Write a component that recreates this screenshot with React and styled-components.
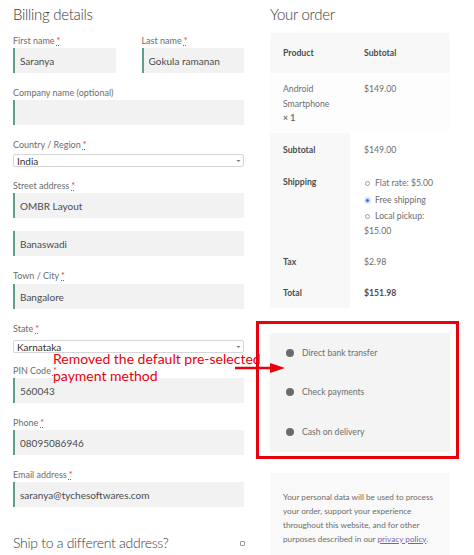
import React from 'react';
import styled, { createGlobalStyle } from 'styled-components';

const Global = createGlobalStyle`
  html, body { margin: 0; padding: 0; background: #fff; }
  body {
    font-family: Lato, "Open Sans", sans-serif;
    color: #6d6d6d;
    width: 474px;
    height: 555px;
    overflow: hidden;
  }
  * { box-sizing: border-box; }
`;

const Page = styled.div`
  position: relative;
  display: grid;
  grid-template-columns: 231px 180px;
  column-gap: 26px;
  align-items: start;
  padding-left: 13px;
  width: 474px;
  height: 555px;
  overflow: hidden;
`;

const Column = styled.div`
  display: flex;
  flex-direction: column;
  min-width: 0;
`;

const Heading = styled.h3`
  margin: 0 0 ${(p) => p.$gap ?? 6}px;
  font-weight: 300;
  font-size: 15px;
  letter-spacing: -0.3px;
  line-height: 28px;
  color: #3a3a3a;
`;

const NameRow = styled.div`
  display: grid;
  grid-template-columns: 1fr 1fr;
  column-gap: 26px;
`;

const Field = styled.div`
  display: flex;
  flex-direction: column;
  margin-bottom: ${(p) => p.$mb ?? 13}px;
`;

const Label = styled.label`
  display: block;
  font-size: 9px;
  line-height: 14px;
  color: #6d6d6d;
`;

const Req = styled.abbr`
  color: #e2401c;
  margin-left: 2px;
  text-decoration: underline dotted;
`;

const TextInput = styled.input`
  display: block;
  width: 100%;
  height: 25px;
  margin: ${(p) => p.$mt ?? 0}px 0 0;
  padding: 0 0 0 5px;
  border: none;
  border-left: 2px solid #5f9e88;
  border-radius: 0;
  background: #f2f2f2;
  font-family: inherit;
  font-size: 10px;
  color: #4a4b50;
  outline: none;
`;

const Select = styled.div`
  display: flex;
  align-items: center;
  justify-content: space-between;
  height: 13px;
  margin-top: ${(p) => p.$mt ?? 2}px;
  padding: 0 2px 0 3px;
  border: 1px solid #d6d6d6;
  border-radius: 2px;
  background: #fff;
  font-size: 10px;
  color: #333;
`;

const ShipRow = styled.div`
  display: flex;
  align-items: center;
  justify-content: space-between;
  margin-top: 22px;
`;

const ShipHeading = styled.h3`
  margin: 0;
  font-weight: 300;
  font-size: 14px;
  letter-spacing: -0.3px;
  line-height: 28px;
  color: #3a3a3a;
`;

const CheckBox = styled.span`
  width: 5px;
  height: 5px;
  margin-right: -1px;
  border: 1px solid #9a9a9a;
  border-radius: 1px;
`;

const OrderTable = styled.table`
  width: 180px;
  border-collapse: collapse;
  table-layout: fixed;
  font-size: 8.7px;
`;

const Row = styled.tr`
  height: ${(p) => p.$h}px;
`;

const Cell = styled.td`
  width: ${(p) => (p.$left ? 80 : 100)}px;
  padding: ${(p) => p.$pad ?? '0'};
  padding-left: ${(p) => (p.$left ? 13 : 14)}px;
  padding-right: ${(p) => (p.$left ? 13 : 4)}px;
  background: ${(p) => p.$bg ?? '#fff'};
  vertical-align: ${(p) => p.$va ?? 'middle'};
  font-weight: ${(p) => (p.$bold ? 700 : 400)};
  color: ${(p) => (p.$bold ? '#4d4d4d' : '#6d6d6d')};
  line-height: 14.5px;
`;

const Qty = styled.strong`
  font-weight: 700;
  white-space: nowrap;
`;

const ShipList = styled.ul`
  margin: 0;
  padding: 0;
  list-style: none;
`;

const ShipItem = styled.li`
  line-height: 15px;
  margin-bottom: 1.5px;
`;

const Radio = styled.span`
  display: inline-block;
  width: 5px;
  height: 5px;
  margin: 0 5px 0 1px;
  border-radius: 50%;
  vertical-align: 0;
  border: ${(p) => (p.$checked ? '1px solid #c9dafc' : '1px solid #a0a0a0')};
  background: ${(p) => (p.$checked ? '#2f78ef' : '#fff')};
  box-shadow: ${(p) => (p.$checked ? '0 0 0 1px #dfe8fb' : 'none')};
`;

const PaymentWrap = styled.div`
  position: relative;
  margin-top: 25px;
`;

const PaymentList = styled.ul`
  margin: 0;
  padding: 0;
  list-style: none;
  background: #f4f4f4;
`;

const PaymentItem = styled.li`
  display: flex;
  align-items: center;
  height: 39.5px;
  padding-left: 16px;
  font-size: 8.6px;
  color: #6d6d6d;
`;

const Bullet = styled.span`
  width: 8px;
  height: 8px;
  margin-right: 8px;
  border-radius: 50%;
  background: #6b6b6b;
`;

const RedFrame = styled.div`
  position: absolute;
  top: -12px;
  left: -14px;
  right: -9px;
  bottom: -7px;
  border: 3px solid #e8000d;
  pointer-events: none;
`;

const Privacy = styled.p`
  margin: 21px 0 0;
  padding: 17px 13px;
  background: #f9f9f9;
  font-size: 8.2px;
  line-height: 14px;
  color: #6d6d6d;
`;

const PolicyLink = styled.a`
  color: #7a5fae;
  text-decoration: underline;
`;

const Note = styled.div`
  position: absolute;
  left: 53px;
  top: 350px;
  font-family: Lato, sans-serif;
  font-size: 14px;
  line-height: 17px;
  color: #e8000d;
  white-space: nowrap;
`;

const Arrow = styled.svg`
  position: absolute;
  left: 235px;
  top: 363px;
`;

const Chevron = () => (
  <svg width="5" height="4" viewBox="0 0 5 4">
    <path d="M0.5 1 L2.5 3 L4.5 1 Z" fill="#777" />
  </svg>
);

const LabelText = ({ children, req }) => (
  <Label>
    {children}
    {req && <Req title="required">*</Req>}
  </Label>
);

export default function App() {
  return (
    <>
      <Global />
      <Page>
        <Column>
          <Heading>Billing details</Heading>
          <NameRow>
            <Field>
              <LabelText req>First name</LabelText>
              <TextInput readOnly value="Saranya" />
            </Field>
            <Field>
              <LabelText req>Last name</LabelText>
              <TextInput readOnly value="Gokula ramanan" />
            </Field>
          </NameRow>
          <Field>
            <LabelText>Company name (optional)</LabelText>
            <TextInput readOnly value="" />
          </Field>
          <Field $mb={12}>
            <LabelText req>Country / Region</LabelText>
            <Select>
              <span>India</span>
              <Chevron />
            </Select>
          </Field>
          <Field>
            <LabelText req>Street address</LabelText>
            <TextInput readOnly value="OMBR Layout" />
            <TextInput readOnly value="Banaswadi" $mt={13} />
          </Field>
          <Field>
            <LabelText req>Town / City</LabelText>
            <TextInput readOnly value="Bangalore" $mt={1} />
          </Field>
          <Field $mb={11}>
            <LabelText req>State</LabelText>
            <Select $mt={4}>
              <span>Karnataka</span>
              <Chevron />
            </Select>
          </Field>
          <Field>
            <LabelText req>PIN Code</LabelText>
            <TextInput readOnly value="560043" />
          </Field>
          <Field>
            <LabelText req>Phone</LabelText>
            <TextInput readOnly value="08095086946" />
          </Field>
          <Field $mb={0}>
            <LabelText req>Email address</LabelText>
            <TextInput readOnly value="saranya@tychesoftwares.com" />
          </Field>
          <ShipRow>
            <ShipHeading>Ship to a different address?</ShipHeading>
            <CheckBox />
          </ShipRow>
        </Column>

        <Column>
          <Heading $gap={5}>Your order</Heading>
          <OrderTable>
            <tbody>
              <Row $h={40}>
                <Cell $left $bold $bg="#f8f8f8">Product</Cell>
                <Cell $bold $bg="#f8f8f8">Subtotal</Cell>
              </Row>
              <Row $h={60}>
                <Cell $left $bg="#fdfdfd" $va="top" $pad="9px 0 7px">
                  Android Smartphone <Qty>×&nbsp;1</Qty>
                </Cell>
                <Cell $bg="#fdfdfd" $va="top" $pad="9px 0 7px">$149.00</Cell>
              </Row>
              <Row $h={35}>
                <Cell $left $bold $bg="#f8f8f8">Subtotal</Cell>
                <Cell>$149.00</Cell>
              </Row>
              <Row $h={77}>
                <Cell $left $bold $bg="#f8f8f8" $va="top" $pad="7px 0 0">Shipping</Cell>
                <Cell $va="top" $pad="7px 0 0">
                  <ShipList>
                    <ShipItem><Radio />Flat rate: $5.00</ShipItem>
                    <ShipItem><Radio $checked />Free shipping</ShipItem>
                    <ShipItem><Radio />Local pickup: $15.00</ShipItem>
                  </ShipList>
                </Cell>
              </Row>
              <Row $h={34}>
                <Cell $left $bold $bg="#f8f8f8">Tax</Cell>
                <Cell>$2.98</Cell>
              </Row>
              <Row $h={29}>
                <Cell $left $bold $bg="#f8f8f8">Total</Cell>
                <Cell $bold>$151.98</Cell>
              </Row>
            </tbody>
          </OrderTable>

          <PaymentWrap>
            <PaymentList>
              <PaymentItem><Bullet />Direct bank transfer</PaymentItem>
              <PaymentItem><Bullet />Check payments</PaymentItem>
              <PaymentItem><Bullet />Cash on delivery</PaymentItem>
            </PaymentList>
            <RedFrame />
          </PaymentWrap>

          <Privacy>
            Your personal data will be used to process your order, support your experience
            throughout this website, and for other purposes described in our{' '}
            <PolicyLink href="#">privacy policy</PolicyLink>.
          </Privacy>
        </Column>

        <Note>
          Removed the default pre-selected
          <br />
          payment method
        </Note>
        <Arrow width="50" height="10" viewBox="0 0 50 10">
          <line x1="0" y1="5" x2="37" y2="5" stroke="#e8000d" strokeWidth="2.5" />
          <polygon points="35,0 50,5 35,10" fill="#e8000d" />
        </Arrow>
      </Page>
    </>
  );
}
